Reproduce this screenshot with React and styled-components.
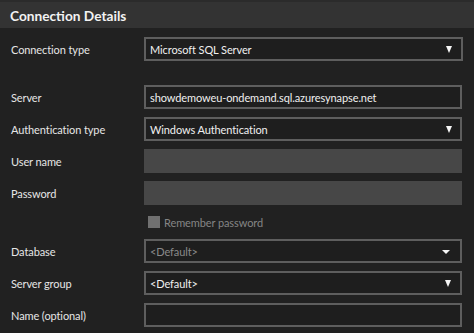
import React from "react";
import styled, { createGlobalStyle } from "styled-components";

const Global = createGlobalStyle`
  html, body { margin: 0; padding: 0; background: #212121; }
  body { font-family: "Lato", "Open Sans", sans-serif; }
`;

const Panel = styled.div`
  width: 474px;
  height: 333px;
  background: #212121;
  overflow: hidden;
  border-top: 2px solid #2b2b2b;
  box-sizing: border-box;
`;

const Header = styled.div`
  height: 26px;
  background: #333333;
  color: #f2f2f2;
  font-size: 13.7px;
  font-weight: 700;
  display: flex;
  align-items: center;
  padding-left: 10px;
`;

const Form = styled.div`
  display: flex;
  flex-direction: column;
  padding: 9px 0 0 0;
`;

const Row = styled.div`
  display: flex;
  align-items: center;
  height: 24px;
  margin-bottom: ${(p) => p.$gap ?? 8}px;
`;

const Label = styled.div`
  width: 133px;
  padding-left: 11px;
  color: #e6e6e6;
  font-size: 11px;
  letter-spacing: -0.1px;
`;

const Field = styled.div`
  box-sizing: border-box;
  width: ${(p) => p.$w ?? 318}px;
  height: 24px;
  display: flex;
  align-items: center;
  padding: 0 4px;
  font-size: 11px;
  letter-spacing: -0.1px;
  color: ${(p) => (p.$muted ? "#8a8a8a" : "#f0f0f0")};
  background: ${(p) => (p.$filled ? "#474747" : "#1e1e1e")};
  border: ${(p) => (p.$filled ? "none" : "2px solid #5e5e5e")};
`;

const Value = styled.span`
  flex: 1;
  white-space: nowrap;
`;

const Arrow = styled.span`
  width: 0;
  height: 0;
  border-left: ${(p) => (p.$small ? 4 : 3.5)}px solid transparent;
  border-right: ${(p) => (p.$small ? 4 : 3.5)}px solid transparent;
  border-top: ${(p) => (p.$small ? 4 : 7)}px solid #f5f5f5;
  margin-right: ${(p) => p.$mr ?? 4}px;
  margin-top: ${(p) => p.$mt ?? 0}px;
`;

const CheckRow = styled.div`
  display: flex;
  align-items: center;
  height: 24px;
  padding-left: 148px;
  margin: 5px 0 5px 0;
`;

const Box = styled.span`
  width: 12px;
  height: 12px;
  background: #707070;
  margin-right: 4px;
`;

const CheckText = styled.span`
  font-size: 11px;
  letter-spacing: -0.1px;
  color: #858585;
`;

export default function App() {
  return (
    <>
      <Global />
      <Panel>
        <Header>Connection Details</Header>
        <Form>
          <Row $gap={24}>
            <Label>Connection type</Label>
            <Field $w={319}>
              <Value>Microsoft SQL Server</Value>
              <Arrow $mr={5} />
            </Field>
          </Row>
          <Row>
            <Label>Server</Label>
            <Field>
              <Value>showdemoweu-ondemand.sql.azuresynapse.net</Value>
            </Field>
          </Row>
          <Row>
            <Label>Authentication type</Label>
            <Field>
              <Value>Windows Authentication</Value>
              <Arrow />
            </Field>
          </Row>
          <Row>
            <Label>User name</Label>
            <Field $filled />
          </Row>
          <Row $gap={0}>
            <Label>Password</Label>
            <Field $filled />
          </Row>
          <CheckRow>
            <Box />
            <CheckText>Remember password</CheckText>
          </CheckRow>
          <Row>
            <Label>Database</Label>
            <Field $muted>
              <Value>&lt;Default&gt;</Value>
              <Arrow $small $mr={6} $mt={2} />
            </Field>
          </Row>
          <Row>
            <Label>Server group</Label>
            <Field>
              <Value>&lt;Default&gt;</Value>
              <Arrow $mr={5} />
            </Field>
          </Row>
          <Row>
            <Label>Name (optional)</Label>
            <Field />
          </Row>
        </Form>
      </Panel>
    </>
  );
}
